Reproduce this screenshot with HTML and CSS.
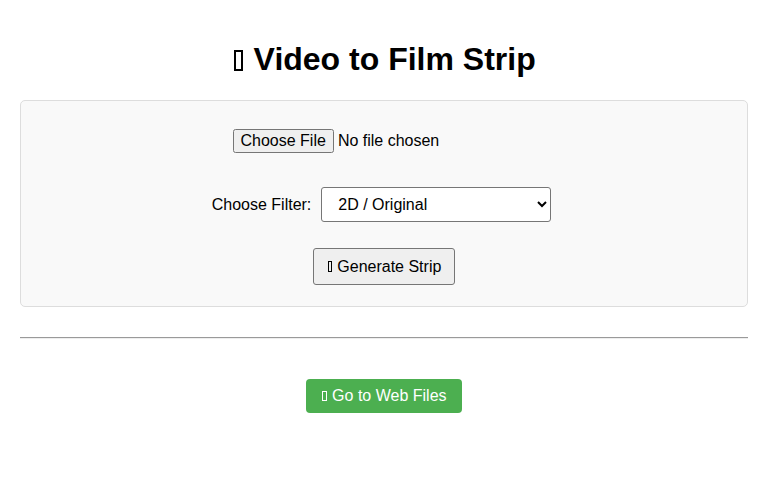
FILE: index.html
```html
<!DOCTYPE html>
<html>
<head>
<meta charset="utf-8">
<link rel="stylesheet" href="styles.css">
</head>
<body>
<h1 class="title"><span class="tofu"></span> Video to Film Strip</h1>
<div class="card">
  <div class="row file-row"><input type="file" class="file"></div>
  <div class="row filter-row">
    <label class="label">Choose Filter:</label>
    <select class="select">
      <option>2D / Original</option>
    </select>
  </div>
  <div class="row"><button class="gen"><span class="tofu"></span> Generate Strip</button></div>
</div>
<hr class="rule">
<div class="row"><a class="web"><span class="tofu"></span> Go to Web Files</a></div>
</body>
</html>
```
FILE: styles.css
```css
html, body { margin: 0; padding: 0; background: #fff; }
body {
  padding: 20px;
  font-family: "Liberation Sans", Arial, sans-serif;
  color: #000;
  text-align: center;
}
.tofu {
  display: inline-block;
  box-sizing: border-box;
  width: 0.29em;
  height: 0.66em;
  border: 0.065em solid currentColor;
  margin: 0 0.04em 0 0.06em;
  vertical-align: -0.02em;
}
.title {
  font-size: 32px;
  font-weight: bold;
  margin: 21px 0 22px;
  line-height: 37px;
}
.card {
  background: #f9f9f9;
  border: 1px solid #ddd;
  border-radius: 5px;
  padding: 28px 20px 21px;
  display: flex;
  flex-direction: column;
  align-items: center;
}
.row { display: flex; justify-content: center; align-items: center; }
.file-row { margin-bottom: 34px; }
.file {
  font-family: "Liberation Sans", Arial, sans-serif;
  font-size: 16px;
}
.filter-row { margin-bottom: 26px; padding-right: 5px; }
.label { font-size: 16px; margin-right: 10px; }
.select {
  font-family: "Liberation Sans", Arial, sans-serif;
  font-size: 16px;
  width: 230px;
  height: 35px;
  padding: 0 10px 0 12px;
  border: 1px solid #767676;
  border-radius: 3px;
  background: #fff;
  color: #000;
}
.gen {
  font-family: "Liberation Sans", Arial, sans-serif;
  font-size: 16px;
  padding: 8px 13px;
  height: 37px;
  border: 1px solid #767676;
  border-radius: 3px;
  background: #efefef;
  color: #000;
}
.rule {
  margin: 30px 0 40px;
  border: 0;
  border-top: 1px solid #9a9a9a;
  border-bottom: 1px solid #eee;
  height: 0;
}
.web {
  display: inline-block;
  background: #4CAF50;
  color: #fff;
  font-size: 16px;
  line-height: 18px;
  padding: 8px 15px;
  border-radius: 4px;
  text-decoration: none;
}
```
